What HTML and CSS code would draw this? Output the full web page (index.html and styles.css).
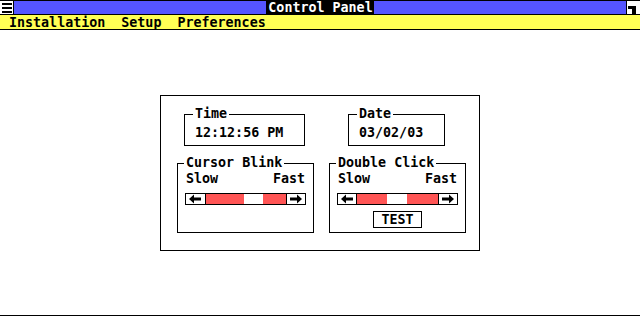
FILE: index.html
```html
<!DOCTYPE html>
<html>

<head>
  <meta name="viewport" content="width=device-width, initial-scale=1">
  <link rel="stylesheet" href="styles.css">
</head>

<body>
  <div class="window">

    <!-- Title bar -->
    <div class="titlebar">
      <span class="sysmenu">
        <svg width="14" height="13" viewBox="0 0 14 13">
          <rect x="0" y="0" width="14" height="13" fill="#fff" />
          <rect x="2" y="2" width="10" height="2" fill="#000" />
          <rect x="2" y="6" width="10" height="2" fill="#000" />
          <rect x="2" y="10" width="10" height="2" fill="#000" />
          <rect x="13" y="0" width="1" height="13" fill="#000" />
        </svg>
      </span>
      <span class="fill"></span>
      <span class="caption">Control Panel</span>
      <span class="fill"></span>
      <span class="maxbox">
        <svg width="14" height="13" viewBox="0 0 14 13">
          <rect x="0" y="0" width="14" height="13" fill="#fff" />
          <rect x="0" y="0" width="1" height="13" fill="#000" />
          <rect x="2" y="5" width="8" height="3" fill="#000" />
          <rect x="6" y="5" width="4" height="8" fill="#000" />
        </svg>
      </span>
    </div>

    <!-- Menu -->
    <div class="menubar">
      <span class="menu-item">Installation</span>
      <span class="menu-item">Setup</span>
      <span class="menu-item">Preferences</span>
    </div>

    <div class="client">
      <div class="dialog">

        <fieldset class="group clock-group time-group">
          <legend>Time</legend>
          <div class="value">12:12:56 PM</div>
        </fieldset>

        <fieldset class="group clock-group date-group">
          <legend>Date</legend>
          <div class="value">03/02/03</div>
        </fieldset>

        <fieldset class="group rate-group">
          <legend>Cursor Blink</legend>
          <div class="ends"><span>Slow</span><span>Fast</span></div>
          <div class="scrollbar">
            <span class="arrow left">
              <svg width="19" height="10" viewBox="0 0 19 10">
                <polygon points="3,5 8,0.5 8,9.5" fill="#000" />
                <rect x="7" y="3.5" width="8" height="3" fill="#000" />
              </svg>
            </span>
            <span class="track" style="width:38px"></span>
            <span class="thumb" style="width:19px"></span>
            <span class="track last"></span>
            <span class="arrow right">
              <svg width="18" height="10" viewBox="0 0 18 10">
                <polygon points="15,5 10,0.5 10,9.5" fill="#000" />
                <rect x="3" y="3.5" width="8" height="3" fill="#000" />
              </svg>
            </span>
          </div>
        </fieldset>

        <fieldset class="group rate-group">
          <legend>Double Click</legend>
          <div class="ends"><span>Slow</span><span>Fast</span></div>
          <div class="scrollbar">
            <span class="arrow left">
              <svg width="18" height="10" viewBox="0 0 18 10">
                <polygon points="3,5 8,0.5 8,9.5" fill="#000" />
                <rect x="7" y="3.5" width="8" height="3" fill="#000" />
              </svg>
            </span>
            <span class="track" style="width:30px"></span>
            <span class="thumb" style="width:20px"></span>
            <span class="track last"></span>
            <span class="arrow right">
              <svg width="18" height="10" viewBox="0 0 18 10">
                <polygon points="15,5 10,0.5 10,9.5" fill="#000" />
                <rect x="3" y="3.5" width="8" height="3" fill="#000" />
              </svg>
            </span>
          </div>
          <div class="test-btn">TEST</div>
        </fieldset>

      </div>
    </div>
  </div>
</body>

</html>
```

FILE: styles.css
```css
* {
  box-sizing: border-box;
}

body {
  margin: 0;
  background-color: #fff;
  color: #000;
  font-family: "DejaVu Sans Mono", "Liberation Mono", monospace;
  font-weight: bold;
  font-size: 13.33px;
}

.window {
  height: 316px;
  display: flex;
  flex-direction: column;
  border-bottom: 1px solid #000;
}

/* title bar */

.titlebar {
  display: flex;
  height: 15px;
  border-top: 1px solid #000;
  border-bottom: 1px solid #000;
  background-color: #5555ff;
}

.titlebar svg {
  display: block;
}

.sysmenu,
.maxbox {
  width: 14px;
  height: 13px;
}

.titlebar .fill {
  flex: 1;
}

.caption {
  background-color: #000;
  color: #fff;
  line-height: 13px;
  padding: 0 1px 0 2px;
  white-space: nowrap;
}

/* menu */

.menubar {
  display: flex;
  gap: 16px;
  height: 15px;
  padding-left: 9px;
  background-color: #ffff55;
  border-bottom: 1px solid #000;
  line-height: 16px;
}

/* dialog */

.client {
  flex: 1;
}

.dialog {
  width: 320px;
  margin: 65px auto 0;
  border: 1px solid #000;
  padding: 10px 13px 17px 16px;
  display: grid;
  grid-template-columns: 137px 137px;
  column-gap: 15px;
  row-gap: 9px;
}

.group {
  margin: 0;
  padding: 0;
  min-width: 0;
  border: 1px solid #000;
  line-height: 14px;
}

.group legend {
  padding: 0 2px;
  line-height: 16px;
}

.clock-group {
  align-self: start;
}

.clock-group legend {
  margin-left: 8px;
}

.time-group {
  width: 121px;
  margin-left: 7px;
}

.date-group {
  width: 97px;
  margin-left: 19px;
}

.value {
  padding: 4px 0 5px 10px;
  white-space: nowrap;
}

.rate-group {
  padding: 1px 7px 4px 7px;
}

.rate-group legend {
  margin-left: -1px;
}

.ends {
  display: flex;
  justify-content: space-between;
  padding: 0 1px;
}

.scrollbar {
  display: flex;
  height: 12px;
  margin-top: 7px;
  border: 1px solid #000;
}

.scrollbar svg {
  display: block;
}

.arrow {
  background-color: #fff;
}

.arrow.left {
  border-right: 1px solid #000;
}

.arrow.right {
  border-left: 1px solid #000;
}

.track {
  background-color: #ff5555;
}

.track.last {
  flex: 1;
}

.thumb {
  background-color: #fff;
}

.test-btn {
  width: fit-content;
  height: 17px;
  margin: 6px auto 0;
  padding: 0 7px;
  border: 1px solid #000;
  line-height: 15px;
}
```
